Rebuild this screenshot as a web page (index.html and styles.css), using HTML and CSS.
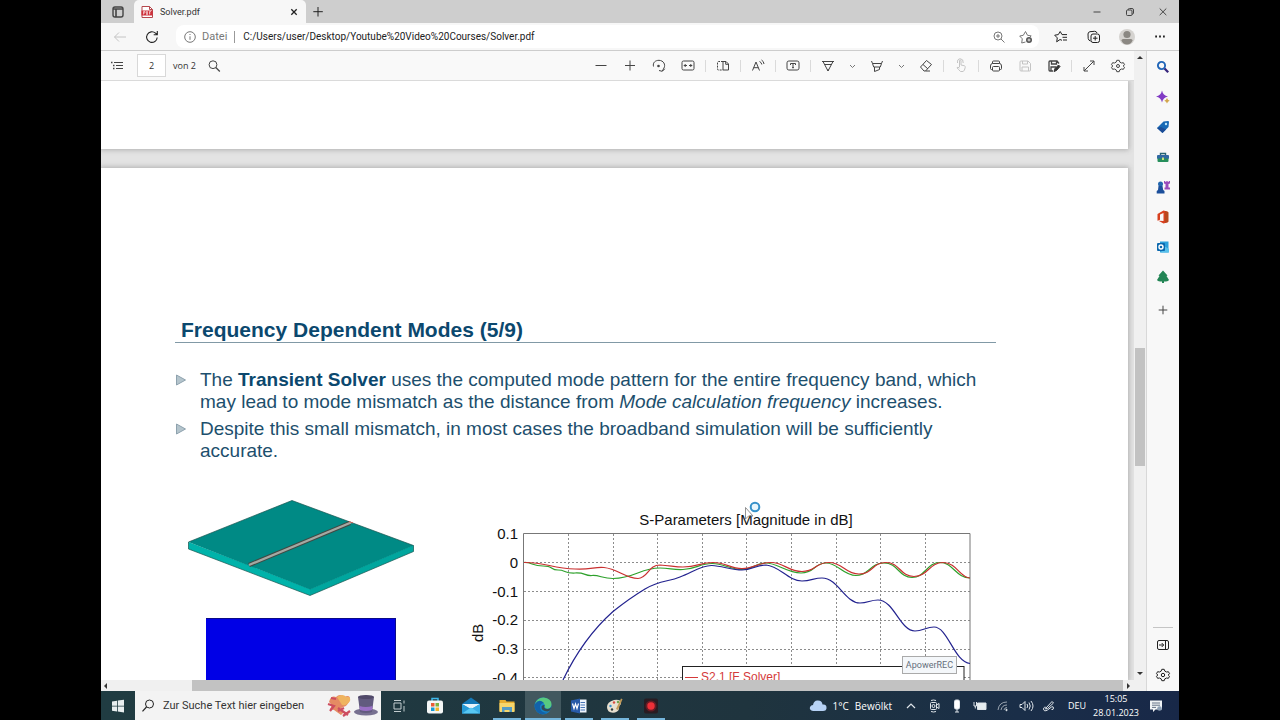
FILE: index.html
```html
<!DOCTYPE html>
<html lang="de">
<head>
<meta charset="utf-8">
<title>Solver.pdf</title>
<link rel="stylesheet" href="styles.css">
</head>
<body>
<div class="desktop">
  <header class="titlebar">
    <button class="btn btn-tabs" aria-label="Tabaktionen"><svg class="icon" viewBox="0 0 16 16"><rect x="3" y="3" width="10" height="10" rx="2" stroke-width="1.4"/><path d="M3 5h10M6 5v8" stroke-width="1.6"/></svg></button>
    <div class="tab">
      <svg class="icon" viewBox="0 0 16 16"><path d="M3 2.500h7.500l3 3v8h-10.500z" fill="#fff" stroke="#b5474d"/><path d="M10.500 2.500v3h3" stroke="#b5474d"/><path d="M2.500 6.500h11v5h-11z" fill="#cf303a" stroke="none"/><path d="M4.500 10.500v-3h1.500v1.500h-1.500M7.500 7.500v3h1v-3zM10.500 10.500v-3h1.500M10.500 9h1" stroke="#fff" stroke-width=".6"/></svg>
      <span class="tab-title">Solver.pdf</span>
      <button class="btn" aria-label="Tab schließen"><svg class="icon dark" viewBox="0 0 16 16"><path d="M5.300 5.300l5.400 5.400M10.700 5.300l-5.400 5.400" stroke-width="1.300"/></svg></button>
    </div>
    <button class="btn" aria-label="Neuer Tab"><svg class="icon dark" viewBox="0 0 16 16"><path d="M8 3v9.500M3.300 7.700h9.500"/></svg></button>
    <div class="window-controls">
      <button class="btn" aria-label="Minimieren"><svg class="icon" viewBox="0 0 16 16"><path d="M4.500 8h7"/></svg></button>
      <button class="btn" aria-label="Verkleinern"><svg class="icon" viewBox="0 0 16 16"><rect x="4.500" y="6" width="5.500" height="5.500" rx="1"/><path d="M6 6q0-1.500 1.500-1.500h2.500q1.500 0 1.500 1.500v3q0 1-1.500 1.300"/></svg></button>
      <button class="btn" aria-label="Schließen"><svg class="icon" viewBox="0 0 16 16"><path d="M4.700 4.500l6.600 6.600M11.300 4.500l-6.600 6.600"/></svg></button>
    </div>
  </header>

  <div class="addressbar">
    <button class="btn faded" aria-label="Zurück"><svg class="icon" viewBox="0 0 16 16"><path d="M14 8H2.500M7 3.500L2.500 8L7 12.500"/></svg></button>
    <button class="btn" aria-label="Aktualisieren"><svg class="icon dark" viewBox="0 0 16 16"><path d="M13.200 8.500a5.300 5.300 0 1 1-1.700-4.300l1.700 1.500M13.300 2v3.800H9.700" stroke-width="1.100"/></svg></button>
    <div class="omnibox">
      <svg class="icon grey" viewBox="0 0 16 16"><circle cx="8" cy="8" r="5.300"/><path d="M8 7.300v3.500M8 5v1"/></svg>
      <span class="scheme">Datei</span>
      <input class="url" type="text" aria-label="Adresse" value="C:/Users/user/Desktop/Youtube%20Video%20Courses/Solver.pdf">
      <button class="btn" aria-label="Zoom"><svg class="icon grey" viewBox="0 0 16 16"><circle cx="7" cy="7" r="4"/><path d="M10 10l3.500 3.500M7 5v4M5 7h4"/></svg></button>
      <button class="btn" aria-label="Zu Favoriten hinzufügen"><svg class="icon grey" viewBox="0 0 16 16"><path d="M7.500 13l-3.800 1 .6-4.200L1.700 7l3.600-.7L7.500 2.500l2 3.800 3.700.6-1.700 1.600"/><circle cx="11" cy="11" r="3" fill="#555" stroke="none"/><path d="M11 9.500v3M9.500 11h3" stroke="#fff" stroke-width=".8"/></svg></button>
    </div>
    <div class="browser-actions">
      <button class="btn" aria-label="Favoriten"><svg class="icon dark" viewBox="0 0 16 16"><path d="M9 11.300L7 10.500l-3.300 2.300.6-3.900L1.700 6.200l3.600-.6L7.200 2.500 9 5.600h5M9.500 8.300H14M10 11h4"/></svg></button>
      <button class="btn" aria-label="Sammlungen"><svg class="icon dark" viewBox="0 0 16 16"><path d="M4.500 12q-2-.5-2.300-2.500L2 5q0-2 2-2.300l4.500-.4q2 0 2.500 1.700"/><rect x="5" y="5" width="8.500" height="8.500" rx="2"/><path d="M9.200 7v4.500M7 9.200h4.500"/></svg></button>
      <button class="btn" aria-label="Profil"><svg class="icon" viewBox="0 0 16 16"><circle cx="8" cy="8" r="8" fill="#d5d3d0" stroke="none"/><circle cx="8" cy="5.500" r="3.600" fill="#8b8883" stroke="none"/><path d="M2.500 11.500q0-1.500 1.500-1.500h8q1.500 0 1.500 1.500-1.500 4-5.500 4t-5.500-4" fill="#8b8883" stroke="none"/></svg></button>
      <button class="btn" aria-label="Einstellungen und mehr"><svg class="icon" viewBox="0 0 16 16"><path d="M3.200 7.500h1.800M7.100 7.500h1.800M11 7.500h1.800" stroke="#222" stroke-width="1.800"/></svg></button>
    </div>
  </div>

  <div class="main">
    <div class="viewer">
      <div class="pane">
        <div class="pdfbar">
          <button class="btn" aria-label="Inhaltsverzeichnis"><svg class="icon" viewBox="0 0 16 16"><path d="M5 4.500h9M7 7.500h7M7 10.500h7"/><path d="M2 4.500h1.500M4 7.500h1.500M4 10.500h1.500" stroke-width="1.500"/></svg></button>
          <input class="page-no" type="text" aria-label="Seite" value="2">
          <span class="page-total">von 2</span>
          <button class="btn" aria-label="Suchen"><svg class="icon" viewBox="0 0 16 16"><circle cx="7" cy="6.700" r="3.900"/><path d="M9.800 9.500l4 4" stroke-width="1.200"/></svg></button>
          <div class="tools">
            <button class="btn" aria-label="Verkleinern"><svg class="icon" viewBox="0 0 16 16"><path d="M2.500 7.500h11"/></svg></button>
            <button class="btn" aria-label="Vergrößern"><svg class="icon" viewBox="0 0 16 16"><path d="M3 7.500h10M8 2.500v10"/></svg></button>
            <button class="btn" aria-label="Drehen"><svg class="icon" viewBox="0 0 16 16"><path d="M2.500 8.500C1.500 4.500 4.500 2.300 8 2.300C12.500 2.500 14.800 6.500 13 10L11.300 13M8 12.500l3.300.8 2.500-2.500"/><circle cx="7.500" cy="8" r="1.300" fill="#444" stroke="none"/></svg></button>
            <button class="btn" aria-label="An Breite anpassen"><svg class="icon" viewBox="0 0 16 16"><rect x="2" y="3" width="12" height="9" rx="1.500"/><path d="M4 7.500h3M9 7.500h3M5.700 6L4.200 7.500l1.500 1.500M10.300 6L11.800 7.500l-1.500 1.500"/></svg></button>
            <span class="sep"></span>
            <button class="btn" aria-label="Seitenansicht"><svg class="icon" viewBox="0 0 16 16"><path d="M8 3.500H3.500q-1 0-1 1v6.500q0 1 1 1H8" stroke-dasharray="2 1"/><path d="M8 3.500h3l2.500 2.500v6H8zM10.700 3.700V6.300h2.800"/></svg></button>
            <span class="sep"></span>
            <button class="btn" aria-label="Laut vorlesen"><svg class="icon" viewBox="0 0 16 16"><path d="M2.500 12.500L6 4l3.500 8.500M3.700 9.700h4.600M9.500 3.500q2 .8 2.300 3M11.500 2q2.200 1.200 2.500 4"/></svg></button>
            <span class="sep"></span>
            <button class="btn" aria-label="Text hinzufügen"><svg class="icon" viewBox="0 0 16 16"><rect x="2" y="3" width="12" height="9" rx="1.800"/><path d="M5.500 7V5.500h5V7M8 5.700v4M7 9.700h2"/></svg></button>
            <span class="sep"></span>
            <button class="btn" aria-label="Zeichnen"><svg class="icon" viewBox="0 0 16 16"><path d="M2 3.500h12M3 3.500l5 9.500 5-9.500M4.500 6.500h7M7 12h2"/></svg></button>
            <button class="btn chevron" aria-label="Zeichenoptionen"><svg viewBox="0 0 7 16"><path d="M1 7l2.500 2.500L6 7"/></svg></button>
            <button class="btn" aria-label="Hervorheben"><svg class="icon" viewBox="0 0 16 16"><path d="M2.500 3l1 2.500h9l1-2.500M3.500 5.500l1.200 3.500h6.600l1.200-3.500M5.500 9v4.500l5-2V9"/></svg></button>
            <button class="btn chevron" aria-label="Hervorhebungsoptionen"><svg viewBox="0 0 7 16"><path d="M1 7l2.500 2.500L6 7"/></svg></button>
            <button class="btn" aria-label="Löschen"><svg class="icon" viewBox="0 0 16 16"><path d="M2.500 9l6-6.500 5 4-6 6.500H6zM5 6.500l5 4.500M7.500 13H12"/></svg></button>
            <span class="sep"></span>
            <button class="btn faded" aria-label="Touch"><svg class="icon" viewBox="0 0 16 16"><path d="M6.500 9V3q0-1 .8-1T8 3v4l3.500.8q1 .3.700 1.700-.5 3-2 4H7.500Q5 11 4 9.800q.5-1.200 2.500.2M4.500 5Q4 .7 7.500.8 10.500 1 10.200 5"/></svg></button>
            <span class="sep"></span>
            <button class="btn" aria-label="Drucken"><svg class="icon" viewBox="0 0 16 16"><path d="M4.500 5.500V4q0-1 1-1h5q1 0 1 1v1.500M4.500 11.500h-1q-1 0-1-1V8q0-2.500 2-2.500h7q2 0 2 2.500v2.500q0 1-1 1h-1"/><rect x="4.500" y="8.500" width="7" height="4.500" rx="1"/></svg></button>
            <button class="btn faded" aria-label="Speichern"><svg class="icon" viewBox="0 0 16 16"><path d="M3 4q0-1 1-1h7l2.500 2.500V12q0 1-1 1H4q-1 0-1-1zM5.500 3v3h5V3M5 13V9h6.500v4"/></svg></button>
            <button class="btn" aria-label="Speichern unter"><svg class="icon" viewBox="0 0 16 16"><path d="M7 13H4q-1 0-1-1V4q0-1 1-1h7l2 2.500M5.500 3v3h5V3M5 13V9h5" stroke-width="1.300"/><path d="M8 13.500l1-3 3.500-3.500 1.500 1.500-3.500 4z" fill="#333" stroke="#333"/></svg></button>
            <span class="sep"></span>
            <button class="btn" aria-label="Vollbild"><svg class="icon" viewBox="0 0 16 16"><path d="M3.200 12.800l9.600-9.600M9 3h4v4M3 9v4h4"/></svg></button>
            <button class="btn" aria-label="PDF-Einstellungen"><svg class="icon" viewBox="0 0 16 16"><path d="M6.800 2.300h2.400l.6 1.800 1.700.9 1.900-.3 1.100 2-1.300 1.300 1.300 1.300-1.100 2-1.900-.3-1.700.9-.6 1.800H6.800l-.6-1.800-1.700-.9-1.900.3-1.100-2L2.800 8 1.500 6.700l1.100-2 1.900.3 1.700-.9z"/><circle cx="8" cy="8" r="1.500"/></svg></button>
          </div>
        </div>
        <div class="pages">
          <section class="page page-prev"></section>
          <article class="page page-current">
            <h1>Frequency Dependent Modes (5/9)</h1>
            <ul class="points">
              <li><svg class="bullet" viewBox="0 0 12 12"><path d="M1.500 1L10.500 6L1.500 11z"/></svg><p>The <strong>Transient Solver</strong> uses the computed mode pattern for the entire frequency band, which<br>may lead to mode mismatch as the distance from <em>Mode calculation frequency</em> increases.</p></li>
              <li><svg class="bullet" viewBox="0 0 12 12"><path d="M1.500 1L10.500 6L1.500 11z"/></svg><p>Despite this small mismatch, in most cases the broadband simulation will be sufficiently<br>accurate.</p></li>
            </ul>
            <div class="figures">
              <svg class="model" viewBox="188 496 226 190">
                <path d="M188.500 542L310 589V595.500L188.500 549z" fill="#00b3aa"/>
                <path d="M310 589L413.500 545V551.500L310 595.500z" fill="#00a69e"/>
                <path d="M188.500 542L292 500.500L413.500 545.500L310 589.500z" fill="#008a85"/>
                <path d="M188.500 542L292 500.500L413.500 545.500V551.500L310 595.500L188.500 549z" fill="none" stroke="#17544f" stroke-width=".7"/>
                <path d="M249 565L350 523" stroke="#3f4a45" stroke-width="4.500"/>
                <path d="M249 565L351 522.500" stroke="#a5a8a2" stroke-width="2.300"/>
                <path d="M349 521.500l4 1.500" stroke="#d35f58"/>
                <rect x="206" y="618" width="190" height="70" fill="#0000e6"/>
                <path d="M206 618.500h189.500V688" fill="none" stroke="#0b0b88"/>
              </svg>
              <div class="chart">
                <svg viewBox="466 496 510 190">
                  <text x="746" y="525" text-anchor="middle">S-Parameters [Magnitude in dB]</text>
                  <g class="grid">
                    <path d="M568.500 534V690M613.500 534V690M657.500 534V690M702.500 534V690M746.500 534V690M791.500 534V690M836.500 534V690M880.500 534V690M925.500 534V690"/>
                    <path d="M524 562.500H970M524 591.500H970M524 620.500H970M524 649.500H970M524 677.500H970"/>
                  </g>
                  <path class="frame" d="M523.500 690V533.500H970V690"/>
                  <g text-anchor="end">
                    <text x="518" y="539">0.1</text><text x="518" y="568">0</text><text x="518" y="597">-0.1</text><text x="518" y="625">-0.2</text><text x="518" y="654">-0.3</text><text x="518" y="683">-0.4</text>
                  </g>
                  <text class="axis" transform="translate(483 642) rotate(-90)">dB</text>
                  <path class="line" stroke="#2ea12c" d="M524 562.500C532 562 532 566 543 566S550 570 558 570S564 573.500 575 573S584 576 592 575.500S602 578.500 613 578.500C635 578.500 640 568 660 568C670 568 673 570 683 569.500C696 569 700 563.500 712 563.500S730 569.500 742 569.500S755 563 766 563S787 573 801 573S814 563 826 563S843 575.500 856 575.500S870 563 884 563S899 577.500 912 577.500S927 562.500 940 562.500S956 578 970 578"/>
                  <path class="line" stroke="#c93030" d="M524 562.500C545 562 552 568.500 575 569C590 570 595 566.500 604 567.500C618 569 625 578 638 578.500C648 578.500 648 565 660 565C670 565.500 675 567 683 567C698 567 700 562.500 713 562.500S730 568.500 742 568.500S758 562.500 771 562.500S788 571.500 802 571.500S815 562.500 829 562.500S845 574 859 574S872 562.500 886 562.500S900 576.500 914 576.500S929 562.500 943 562.500S959 577 970 578"/>
                  <path class="line" stroke="#23238f" d="M563 680C575 655 590 632 613 611.500C625 602 635 595 645 589C660 580 668 582 680 577C693 572 702 565 712 565.500C722 566 732 570 742 570C752 570 756 565 766 565C780 566 788 581 802 581C811 581 814 578 822 578C838 578 845 603 860 603C868 603 870 600 878 600C894 600 900 631 915 631C923 631 926 627 934 627C948 627 954 662 970 663.500"/>
                  <rect x="682.500" y="666.500" width="281.500" height="40" fill="#fff" stroke="#222"/>
                  <path d="M685 677.500h13" stroke="#d43a3a"/>
                  <text x="701" y="681" class="legend">S2,1 [F Solver]</text>
                </svg>
                <svg class="cursor" viewBox="0 0 20 20"><path d="M1.500 6.500V18l3-3h4.500z" fill="#fff" fill-opacity=".6" stroke="#777" stroke-width=".8"/><circle cx="11" cy="6" r="4.300" fill="#e9f6fc" stroke="#3691c9" stroke-width="2"/></svg>
              </div>
            </div>
          </article>
        </div>
        <div class="hscroll"><span class="arrow left"></span><span class="htrack"><span class="hthumb"></span></span><span class="arrow right"></span></div>
      </div>
      <div class="vscroll"><span class="arrow up"></span><span class="vtrack"><span class="vthumb"></span></span><span class="arrow down"></span></div>
    </div>
    <aside class="sidebar">
      <button class="btn" aria-label="Suche"><svg class="icon" viewBox="0 0 16 16"><circle cx="6.500" cy="6.500" r="3.600" stroke="#2166b8" stroke-width="1.900"/><path d="M9.500 9.500l3.700 3.700" stroke="#36257c" stroke-width="2.300"/></svg></button>
      <button class="btn" aria-label="Entdecken"><svg class="icon" viewBox="0 0 16 16"><path d="M7 1.500q1 5 6 6-5 1-6 6-1-5-6-6 5-1 6-6z" fill="#813bc4" stroke="none"/><path d="M12 9q.6 2 2.700 2.700-2.100.6-2.700 2.700-.6-2.100-2.700-2.700 2.100-.7 2.700-2.700z" fill="#d2a64b" stroke="none"/></svg></button>
      <button class="btn" aria-label="Einkaufen"><svg class="icon" viewBox="0 0 16 16"><path d="M2 9l6.500-6.500 4.500-.5q1 0 1 1l-.5 5L7.500 14z" fill="#1769b5" stroke="none"/><path d="M2 9l4-1 5 2.500L7.500 14z" fill="#1c4c96" stroke="none"/><circle cx="11" cy="5" r="1.200" fill="#bde6fa" stroke="none"/></svg></button>
      <button class="btn" aria-label="Werkzeuge"><svg class="icon" viewBox="0 0 16 16"><path d="M5.500 6V4.500h5V6" stroke="#286574" stroke-width="1.400"/><rect x="2" y="6" width="12" height="4" rx="1" fill="#3169a3" stroke="none"/><path d="M2.500 9.500h11V12q0 1-1 1h-9q-1 0-1-1z" fill="#278f5c" stroke="none"/><path d="M7 8.500h2v2.500H7z" fill="#cae27c" stroke="none"/></svg></button>
      <button class="btn" aria-label="Spiele"><svg class="icon" viewBox="0 0 16 16"><circle cx="5.500" cy="5" r="2.500" fill="#2466ae" stroke="none"/><path d="M3.500 7h4l.7 4 1.300 1v2.500H1.700V12L3 11z" fill="#1c4f9b" stroke="none"/><path d="M9 2h1.300v1h1V2h1.400v1h1V2H15v2.500l-1.500.5v3.500H15V10.500H9.500V8.500h1V5L9 4.500z" fill="#9a4cbb" stroke="none"/></svg></button>
      <button class="btn" aria-label="Office"><svg class="icon" viewBox="0 0 16 16"><path d="M2.500 5L8.500 1.500l4.500 1.300v10.400l-4.500 1.300-5-2.800 5 .3V4L5 5.500v5.300l-2.500 1z" fill="#d8401f" stroke="none"/><path d="M10 2l3.500 1.200v9.600L10 14z" fill="#b8471d" stroke="none"/></svg></button>
      <button class="btn" aria-label="Outlook"><svg class="icon" viewBox="0 0 16 16"><path d="M5 2.500h8.500v11H5z" fill="#2ba0dc" stroke="none"/><path d="M9 7l5 3v3.500H6z" fill="#59c0ea" stroke="none"/><rect x="2" y="4" width="8" height="8" rx="1" fill="#0b68ae" stroke="none"/><circle cx="6" cy="8" r="2" stroke="#fff" stroke-width="1.400"/></svg></button>
      <button class="btn" aria-label="Baum"><svg class="icon" viewBox="0 0 16 16"><path d="M8 1.500l4.500 5-1 .5 2.500 4q-1 1.500-5 1.500V14H7v-1.500q-4 0-5-1.500l2.500-4-1-.5z" fill="#238555" stroke="none"/></svg></button>
      <button class="btn add" aria-label="Hinzufügen"><svg class="icon" viewBox="0 0 16 16"><path d="M8 3.700v8.600M3.700 8h8.600"/></svg></button>
      <hr>
      <button class="btn" aria-label="Randleiste ausblenden"><svg class="icon dark" viewBox="0 0 16 16"><rect x="2.500" y="3.500" width="11" height="9" rx="1.500"/><path d="M10.500 3.500v9M4 8h4.500M6.700 6L8.700 8l-2 2"/></svg></button>
      <button class="btn" aria-label="Einstellungen"><svg class="icon dark" viewBox="0 0 16 16"><path d="M6.800 2.300h2.400l.6 1.800 1.700.9 1.900-.3 1.100 2-1.300 1.300 1.300 1.300-1.100 2-1.900-.3-1.700.9-.6 1.800H6.800l-.6-1.800-1.700-.9-1.900.3-1.100-2L2.800 8 1.500 6.700l1.100-2 1.900.3 1.700-.9z"/><circle cx="8" cy="8" r="1.700"/></svg></button>
    </aside>
  </div>

  <footer class="taskbar">
    <button class="start" aria-label="Start"><svg class="icon" viewBox="0 0 16 16"><path d="M2 3.500l5-.8v5H2zM7.800 2.600L14 1.800v5.900H7.800zM2 8.500h5v5l-5-.8zM7.800 8.500H14v6l-6.200-.9z" fill="#e8eef0" stroke="none"/></svg></button>
    <div class="search">
      <svg class="icon dark" viewBox="0 0 16 16"><circle cx="9.500" cy="6" r="4"/><path d="M6.500 9L2.500 13.300" stroke-width="1.200"/></svg>
      <input type="text" aria-label="Suche" value="Zur Suche Text hier eingeben">
      <svg class="hats" viewBox="0 0 52 24"><path d="M2 8q2-7 7-5 4-4 8 0 6-3 6 2-2 7-7 8l-5 3 6 2-3 3-7-5-4-1q3-4-1-7z" fill="#e58b63"/><path d="M10 3q6-4 9 0 5-1 4 4-3 5-8 4z" fill="#efb45f"/><path d="M1 10l6 2-4 5M9 5l-5-1M11 14l10 7M17 14l-6 3M23 17l-7 5" stroke="#cd4d60" stroke-width="2.200" fill="none"/><ellipse cx="39" cy="18" rx="12" ry="3.500" fill="#777090"/><path d="M31 3q8-3 16 0l-2 15q-6 2-12 0z" fill="#625b7e"/><path d="M32.500 12q6 2 13 0l-.5 4q-6 2-12 0z" fill="#9a70c5"/><ellipse cx="39" cy="3" rx="8" ry="2" fill="#514a6a"/></svg>
    </div>
    <nav class="apps">
      <button class="app" aria-label="Aktive Anwendungen"><svg class="icon" viewBox="0 0 16 16"><path d="M3 2.500h7M3 13.500h7M3 5h7v6H3zM13 2.500v3M13 8v5.500" stroke="#c3cdd0"/></svg></button>
      <button class="app" aria-label="Store"><svg viewBox="0 0 18 18"><path d="M6 4V1.500h6V4" fill="none" stroke="#40b9ec" stroke-width="1.500"/><rect x="1" y="3.500" width="16" height="13" rx="2" fill="#f4f7f7"/><path d="M5 6h3.500v3.500H5z" fill="#e85c38"/><path d="M9.500 6H13v3.500H9.500z" fill="#7cb342"/><path d="M5 10.500h3.500V14H5z" fill="#159bd7"/><path d="M9.500 10.500H13V14H9.500z" fill="#f0b72d"/></svg></button>
      <button class="app" aria-label="Mail"><svg viewBox="0 0 18 18"><path d="M0 7l9-6.500L18 7v9.500H0z" fill="#1478b7"/><path d="M0 7h18L9 12.500z" fill="#e8f4fb"/><path d="M0 7l9 5-9 4.500z" fill="#279bd7"/><path d="M18 7l-9 5 9 4.500z" fill="#3aade5"/><path d="M0 16.500l9-6 9 6z" fill="#57c7f3"/></svg></button>
      <button class="app running" aria-label="Explorer"><svg viewBox="0 0 18 18"><path d="M1.500 3h6l1 1.500h8V14h-15z" fill="#e8ae2f"/><path d="M1.500 6h15v9h-15z" fill="#f6d66b"/><path d="M4 15v-5h10v5h-2.500v-2h-5v2z" fill="#559cc4"/></svg></button>
      <button class="app running active" aria-label="Edge"><svg viewBox="0 0 18 18"><circle cx="9" cy="9" r="8.500" fill="#1683c5"/><path d="M1 7Q3 .5 9.500.5q8 1 8 7-.5 5-5.500 4-2-1-1-3Q9 3 1 7z" fill="#58ca80"/><path d="M1 7q4-6 9-1-4 0-4 4.500 1 6 8 5Q6 20 1.500 12.500 0 9 1 7z" fill="#1262a9"/><path d="M10.500 8q-1.500 4 3 4 3 0 4-3-.5 5-4 5.500Q7 14 7.500 9.500q1-2 3-1.500z" fill="#354c54"/></svg></button>
      <button class="app running" aria-label="Word"><svg viewBox="0 0 18 18"><path d="M7 2.500h9.500v13H7z" fill="#eef4fc"/><path d="M10.500 5.500h4.500M10.500 8h4.500M10.500 10.500h4.500M10.500 13h4.500" stroke="#4775b6"/><path d="M1 3.500l9-2v15l-9-2z" fill="#285aa8"/><path d="M2.500 6.500l1.500 5L5.500 7 7 11.500l1.500-5" fill="none" stroke="#fff" stroke-width="1.200"/></svg></button>
      <button class="app running" aria-label="Paint"><svg viewBox="0 0 18 18"><path d="M1 10q0-5 7-7 7-1 7 3 0 2-2 3 1 5-4 6.500-8 1-8-5.500z" fill="#e7dfcf"/><circle cx="4.500" cy="9" r="1.200" fill="#3890ca"/><circle cx="8" cy="5.500" r="1.200" fill="#d94c43"/><circle cx="12" cy="5" r="1.200" fill="#6ba64d"/><circle cx="6" cy="12.500" r="1.200" fill="#303a3d"/><path d="M10 12l5-10.500 1.500.7L12 13z" fill="#c29a58"/></svg></button>
      <button class="app running" aria-label="ApowerREC"><svg viewBox="0 0 18 18"><rect x="2" y="1.500" width="14" height="15" rx="2" fill="#291c22"/><circle cx="9" cy="9" r="5.500" fill="#681c25"/><circle cx="9" cy="9" r="3.700" fill="#ee3038"/></svg></button>
    </nav>
    <div class="tray">
      <button class="weather"><svg viewBox="0 0 18 14"><path d="M4 12Q0 11 1 8q1-2 3-2 1-5 5-4.500 4 0 4.500 4Q18 5 17.500 9.500 17 12 14 12z" fill="#b6d2f5"/></svg><span>1°C</span><span>Bewölkt</span></button>
      <svg class="icon" viewBox="0 0 16 16"><path d="M4 10l4-4 4 4" stroke-width="1.200"/></svg>
      <svg class="icon" viewBox="0 0 16 16"><rect x="4.500" y="4.500" width="6" height="7" rx="1"/><circle cx="7.500" cy="8" r="1.500"/><path d="M10.500 7L13 5.500v5L10.500 9M5 2.500q2.500-1 5 0M5 13.500q2.500 1 5 0"/></svg>
      <svg class="icon" viewBox="0 0 16 16"><rect x="5.500" y="2" width="5" height="9" rx="1.500" fill="#fff"/><path d="M8 11v3M6 14h4"/></svg>
      <svg class="icon" viewBox="0 0 16 16"><path d="M5.500 5H14v6.500H5.500z" fill="#e6edf0"/><path d="M2 4v4h2.500V4M3.300 8v2.500"/></svg>
      <svg class="icon" viewBox="0 0 16 16"><path d="M3 12Q4 4 12 4M6 12q1-5 6-5M9 12q.5-2.500 3-2.500" opacity=".65"/><circle cx="11.500" cy="12" r=".7" fill="#fff"/></svg>
      <svg class="icon" viewBox="0 0 16 16"><path d="M2 6.500h2l3-3v9l-3-3H2zM9 6q1.500 2 0 4M11 4.500q2.500 3.500 0 7M13 3q4 5 0 10"/></svg>
      <svg class="icon" viewBox="0 0 16 16"><path d="M5.500 9.500l5.500-6 1.500 1.500-6 5.500-2 .5zM6 10q-3-2-3.500 1 .5 3 4 1l4-3q2-1 2 1t-2 1.500"/></svg>
      <span class="lang">DEU</span>
      <time class="clock"><span>15:05</span><span>28.01.2023</span></time>
      <button class="btn" aria-label="Benachrichtigungen"><svg class="icon" viewBox="0 0 16 16"><path d="M2 2.500h12v9H7.500L5 14v-2.500H2z" fill="#f0f3f5" stroke="none"/><path d="M4 5h8M4 7.200h8M4 9.400h4" stroke="#41516a" stroke-width=".8"/><circle cx="11.500" cy="10.500" r="2.300" fill="#8da0b5" stroke="none"/></svg></button>
    </div>
    <span class="tooltip" role="tooltip">ApowerREC</span>
  </footer>
</div>
</body>
</html>
```
FILE: styles.css
```css
* { box-sizing: border-box; }
body { margin: 0; background: #000; font: 10px/14px "Open Sans", "Noto Sans", sans-serif; color: #333; }
button, input { font: inherit; color: inherit; border: 0; background: none; padding: 0; margin: 0; border-radius: 0; min-width: 0; }
svg { display: block; flex: none; }

.desktop { height: 100vh; margin: 0 101px; display: flex; flex-direction: column; background: #f7f7f7; overflow: hidden; }
.icon { width: 16px; height: 16px; fill: none; stroke: currentColor; stroke-width: 1; }
.btn { display: flex; align-items: center; justify-content: center; flex: none; width: 16px; height: 16px; color: #444; }
.dark { color: #222; }
.grey { color: #777; }
.faded { color: #c4c4c4; }

.titlebar { display: flex; align-items: center; height: 23px; background: #cecece; flex: none; }
.btn-tabs { width: 33px; }
.tab { display: flex; align-items: center; width: 172px; height: 23px; margin-right: 4px; padding: 0 4px 0 5px; background: #f7f7f7; border-radius: 5px 5px 0 0; }
.tab-title { flex: 1; margin-left: 5px; font-family: Roboto, sans-serif; font-size: 9px; }
.window-controls { display: flex; gap: 17px; margin-left: auto; padding-right: 8px; }

.addressbar { display: flex; align-items: center; height: 28px; flex: none; padding: 0 11px; gap: 16px; border-bottom: 1px solid #cdcdcd; background: #f7f7f7; }
.omnibox { display: flex; flex: 1; align-items: center; height: 23px; padding: 0 5px 0 6px; border-radius: 8px; background: #fff; font-family: Roboto, sans-serif; font-size: 11px; }
.scheme { margin-left: 4px; padding-right: 7px; line-height: 12px; color: #777; border-right: 1px solid #999; }
.url { flex: 1; padding-left: 8px; font-size: 10px; color: #222; }
.omnibox .btn + .btn { margin-left: 11px; }
.browser-actions { display: flex; gap: 17px; margin-left: -2px; }

.main { display: flex; flex: 1; min-height: 0; }
.viewer { display: flex; flex: 1; min-width: 0; border-right: 1px solid #d8d8d8; }
.pane { display: flex; flex-direction: column; flex: 1; min-width: 0; }
.pdfbar { display: flex; align-items: center; flex: none; height: 30px; padding: 0 8px; background: #f9f9f9; border-bottom: 1px solid #dadada; }
.page-no { width: 29px; height: 23px; margin-left: 12px; text-align: center; background: #fff; border: 1px solid #d8d8d8; font-size: 9px; }
.page-total { margin: 0 10px 0 7px; font-size: 9px; }
.tools { display: flex; align-items: center; gap: 13px; margin-left: auto; }
.sep { width: 1px; height: 12px; margin: 0 -4px; background: #dadada; }
.chevron, .chevron svg { width: 7px; height: 16px; fill: none; stroke: #777; }

.pages { display: flex; flex-direction: column; gap: 19px; flex: 1; min-height: 0; overflow: hidden; padding-right: 6px; background: #e3e3e3; }
.page { background: #fff; box-shadow: 0 0 5px 1px #b0b0b0; }
.page-prev { flex: none; height: 68px; }
.page-current { flex: 1; min-height: 0; overflow: hidden; padding: 150px 132px 0 74px; font-family: "Liberation Sans", Arial, sans-serif; color: #1d4f6d; }
h1 { margin: 0; padding-left: 6px; font-size: 21px; line-height: 24px; color: #0b486e; border-bottom: 1px solid #8199a6; }
.points { margin: 26px 0 0; padding: 0; list-style: none; display: flex; flex-direction: column; gap: 5px; font-size: 19px; line-height: 22px; }
.points li { display: flex; gap: 13px; }
.points p { margin: 0; white-space: nowrap; }
strong { color: #0b486e; }
.bullet { width: 12px; height: 12px; margin-top: 5px; fill: #b4c4cc; stroke: #8ea2ae; }
.figures { display: flex; align-items: flex-start; gap: 52px; margin: 34px 0 0 13px; }
.model { width: 226px; height: 190px; }
.chart { position: relative; width: 510px; }
.chart > svg:first-child { width: 510px; height: 190px; }
.chart text { font-size: 15px; fill: #111; }
.chart .legend { font-size: 12px; fill: #d43a3a; }
.grid { stroke: #8c8c8c; stroke-dasharray: 2 2; fill: none; }
.frame { stroke: #777; fill: none; }
.line { fill: none; stroke-width: 1.2; }
.chart .cursor { position: absolute; left: 278px; top: 5px; width: 20px; height: 20px; }

.hscroll { display: flex; align-items: center; height: 11px; flex: none; background: #f0f0f0; }
.htrack { display: flex; flex: 1; height: 11px; justify-content: flex-end; }
.hthumb { width: 92%; background: #c2c2c2; }
.arrow { width: 0; height: 0; border: 3px solid transparent; flex: none; }
.left { border-right-color: #333; border-left: 0; margin: 0 4px 0 3px; }
.right { border-left-color: #333; border-right: 0; margin: 0 4px; }
.up { border-bottom-color: #333; border-top: 0; margin: 5px 0; }
.down { border-top-color: #333; border-bottom: 0; margin: 5px 0; }
.vscroll { display: flex; flex-direction: column; align-items: center; width: 12px; flex: none; padding-bottom: 11px; background: #f0f0f0; }
.vtrack { display: flex; flex-direction: column; flex: 1; width: 10px; }
.vtrack::before { content: ""; flex: 283; }
.vtrack::after { content: ""; flex: 200; }
.vthumb { flex: 117; background: #c2c2c2; }

.sidebar { display: flex; flex-direction: column; align-items: center; gap: 14px; width: 32px; flex: none; padding: 8px 0; background: #f8f8f8; }
.add { margin-top: 3px; }
.sidebar hr { width: 20px; margin: auto 0 -5px; border: 0; border-top: 1px solid #c5c5c5; }

.taskbar { position: relative; display: flex; height: 29px; flex: none; background: linear-gradient(90deg, #203c42, #1f343e 60%, #1a2e48 85%, #182848); color: #fff; }
.start { display: flex; align-items: center; justify-content: center; width: 34px; }
.search { display: flex; align-items: center; width: 246px; padding: 0 2px 0 5px; background: #f3f3f3; }
.search input { flex: 1; margin-left: 7px; font-family: Roboto, sans-serif; font-size: 11px; color: #333; }
.hats { width: 52px; height: 24px; }
.apps { display: flex; }
.app { display: flex; align-items: center; justify-content: center; width: 36px; }
.app > svg:not(.icon) { width: 18px; height: 18px; }
.running { background: linear-gradient(#75b6dc, #75b6dc) 50% 100% / 28px 2px no-repeat; }
.active { background: #42585f linear-gradient(#75b6dc, #75b6dc) 50% 100% / 36px 2px no-repeat; }
.tray { display: flex; align-items: center; gap: 7px; margin-left: auto; padding-right: 15px; }
.tray .icon { color: #dfe5ea; }
.tray .weather { display: flex; align-items: center; gap: 6px; margin-right: 4px; }
.weather svg { width: 18px; height: 14px; }
.lang { margin-left: 4px; font-size: 9px; }
.clock { display: flex; flex-direction: column; align-items: center; margin-right: 2px; font-size: 9px; }
.tooltip { position: absolute; right: 222px; bottom: 46px; padding: 0 3px; font-family: Roboto, sans-serif; font-size: 9px; line-height: 16px; color: #66707a; background: #f4f7fa; border: 1px solid #aaa; }
```
